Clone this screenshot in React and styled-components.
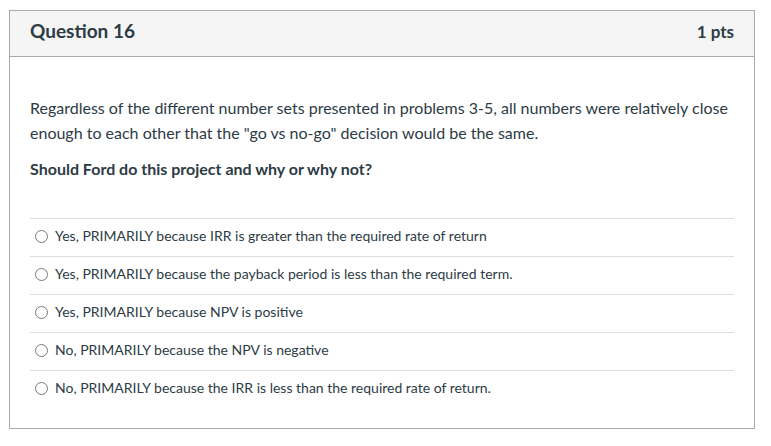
import React from "react";
import styled, { createGlobalStyle } from "styled-components";

const Global = createGlobalStyle`
  html, body { margin: 0; padding: 0; background: #fff; }
  body { font-family: Lato, "Helvetica Neue", Arial, sans-serif; color: #2d3b45; }
`;

const Page = styled.div`
  padding: 10px 16px 0 9px;
`;

const Card = styled.div`
  width: 744px;
  border: 1px solid #aaaaaa;
  box-sizing: content-box;
`;

const Header = styled.div`
  display: flex;
  justify-content: space-between;
  align-items: center;
  height: 46px;
  padding: 0 20px 6px;
  box-sizing: border-box;
  background: #f5f5f5;
  border-bottom: 1px solid #aaaaaa;
`;

const Title = styled.div`
  font-size: 19px;
  font-weight: 700;
  color: #2d3b45;
`;

const Points = styled.div`
  font-size: 17px;
  font-weight: 700;
  color: #2d3b45;
  margin-top: 2px;
`;

const Body = styled.div`
  padding: 38px 20px 20px;
`;

const Para = styled.p`
  margin: 0 0 ${(p) => p.$mb || 0}px;
  font-size: 16px;
  line-height: 25px;
  font-weight: ${(p) => (p.$bold ? 700 : 400)};
`;

const Answers = styled.div`
  margin-top: 37px;
`;

const Row = styled.label`
  display: flex;
  align-items: center;
  box-sizing: content-box;
  height: 33px;
  padding-bottom: 4px;
  border-top: 1px solid #dddddd;
  font-size: 14px;
  gap: 7px;
  padding-left: 5px;
`;

const Radio = styled.span`
  width: 11px;
  height: 11px;
  border: 1px solid #7a7a7a;
  border-radius: 50%;
  flex: none;
  margin-top: 1px;
`;

const answers = [
  "Yes, PRIMARILY because IRR is greater than the required rate of return",
  "Yes, PRIMARILY because the payback period is less than the required term.",
  "Yes, PRIMARILY because NPV is positive",
  "No, PRIMARILY because the NPV is negative",
  "No, PRIMARILY because the IRR is less than the required rate of return.",
];

export default function App() {
  return (
    <>
      <Global />
      <Page>
        <Card>
          <Header>
            <Title>Question 16</Title>
            <Points>1 pts</Points>
          </Header>
          <Body>
            <Para $mb={11}>
              Regardless of the different number sets presented in problems 3-5, all numbers were relatively close
              enough to each other that the "go vs no-go" decision would be the same.
            </Para>
            <Para $bold>Should Ford do this project and why or why not?</Para>
            <Answers>
              {answers.map((a) => (
                <Row key={a}>
                  <Radio />
                  <span>{a}</span>
                </Row>
              ))}
            </Answers>
          </Body>
        </Card>
      </Page>
    </>
  );
}
